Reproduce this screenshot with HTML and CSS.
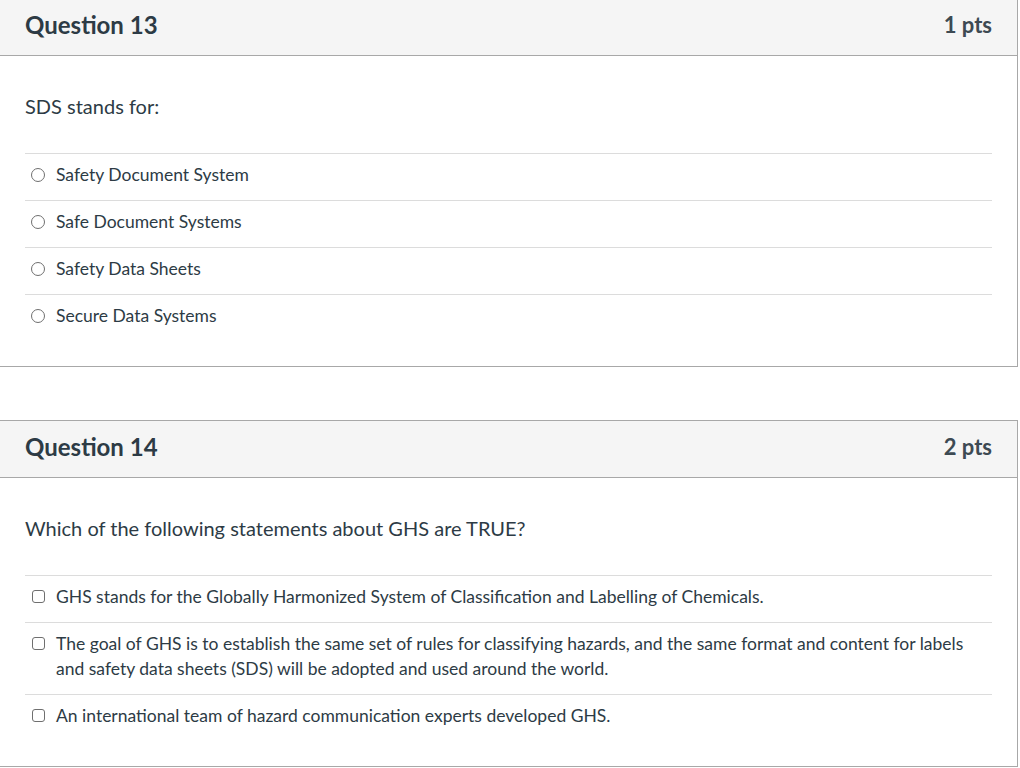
FILE: index.html
```html
<!DOCTYPE html>
<html lang="en">
<head>
<meta charset="utf-8">
<title>Quiz</title>
<link rel="stylesheet" href="styles.css">
</head>
<body>
<main class="quiz">
  <section class="question">
    <header class="q-header">
      <h2 class="q-title">Question 13</h2>
      <span class="q-pts">1 pts</span>
    </header>
    <div class="q-body">
      <p class="q-text">SDS stands for:</p>
      <ul class="answers">
        <li class="answer"><span class="radio"></span><span class="a-text">Safety Document System</span></li>
        <li class="answer"><span class="radio"></span><span class="a-text">Safe Document Systems</span></li>
        <li class="answer"><span class="radio"></span><span class="a-text">Safety Data Sheets</span></li>
        <li class="answer"><span class="radio"></span><span class="a-text">Secure Data Systems</span></li>
      </ul>
    </div>
  </section>

  <section class="question">
    <header class="q-header">
      <h2 class="q-title">Question 14</h2>
      <span class="q-pts">2 pts</span>
    </header>
    <div class="q-body">
      <p class="q-text">Which of the following statements about GHS are TRUE?</p>
      <ul class="answers">
        <li class="answer"><span class="check"></span><span class="a-text">GHS stands for the Globally Harmonized System of Classification and Labelling of Chemicals.</span></li>
        <li class="answer"><span class="check"></span><span class="a-text">The goal of GHS is to establish the same set of rules for classifying hazards, and the same format and content for labels and safety data sheets (SDS) will be adopted and used around the world.</span></li>
        <li class="answer"><span class="check"></span><span class="a-text">An international team of hazard communication experts developed GHS.</span></li>
      </ul>
    </div>
  </section>
</main>
</body>
</html>
```

FILE: styles.css
```css
html, body {
  margin: 0;
  padding: 0;
  background: #ffffff;
}
body {
  font-family: Lato, "Open Sans", "Liberation Sans", sans-serif;
  color: #2d3b45;
}
.quiz {
  margin: -2px 2px 0 -1px;
  display: flex;
  flex-direction: column;
  gap: 53px;
}
.question {
  border: 1px solid #a8a8a8;
  background: #fff;
}
.q-header {
  box-sizing: border-box;
  height: 57px;
  background: #f5f5f5;
  border-bottom: 1px solid #a8a8a8;
  display: flex;
  align-items: center;
  justify-content: space-between;
  padding: 0 25px 5px 25px;
}
.q-title {
  margin: 0;
  font-size: 24px;
  font-weight: 700;
  color: #2d3b45;
}
.q-pts {
  font-size: 22px;
  font-weight: 700;
  color: #3d4a53;
}
.q-body {
  padding: 38px 25px 25px 25px;
}
.q-text {
  margin: 0 0 35px 0;
  font-size: 20px;
  line-height: 24px;
}
.answers {
  list-style: none;
  margin: 0;
  padding: 0;
}
.answer {
  border-top: 1px solid #dcdcdc;
  padding: 8px 0 13px 0;
  display: flex;
  align-items: flex-start;
  font-size: 17.5px;
  line-height: 25px;
}
.radio {
  flex: none;
  width: 12px;
  height: 12px;
  border: 1.5px solid #6f6f6f;
  border-radius: 50%;
  margin: 6px 11px 0 6px;
  box-sizing: content-box;
}
.check {
  flex: none;
  width: 11px;
  height: 11px;
  border: 1.5px solid #6f6f6f;
  border-radius: 3px;
  margin: 6px 11px 0 7px;
  box-sizing: content-box;
}
.a-text {
  flex: 1;
}
```
